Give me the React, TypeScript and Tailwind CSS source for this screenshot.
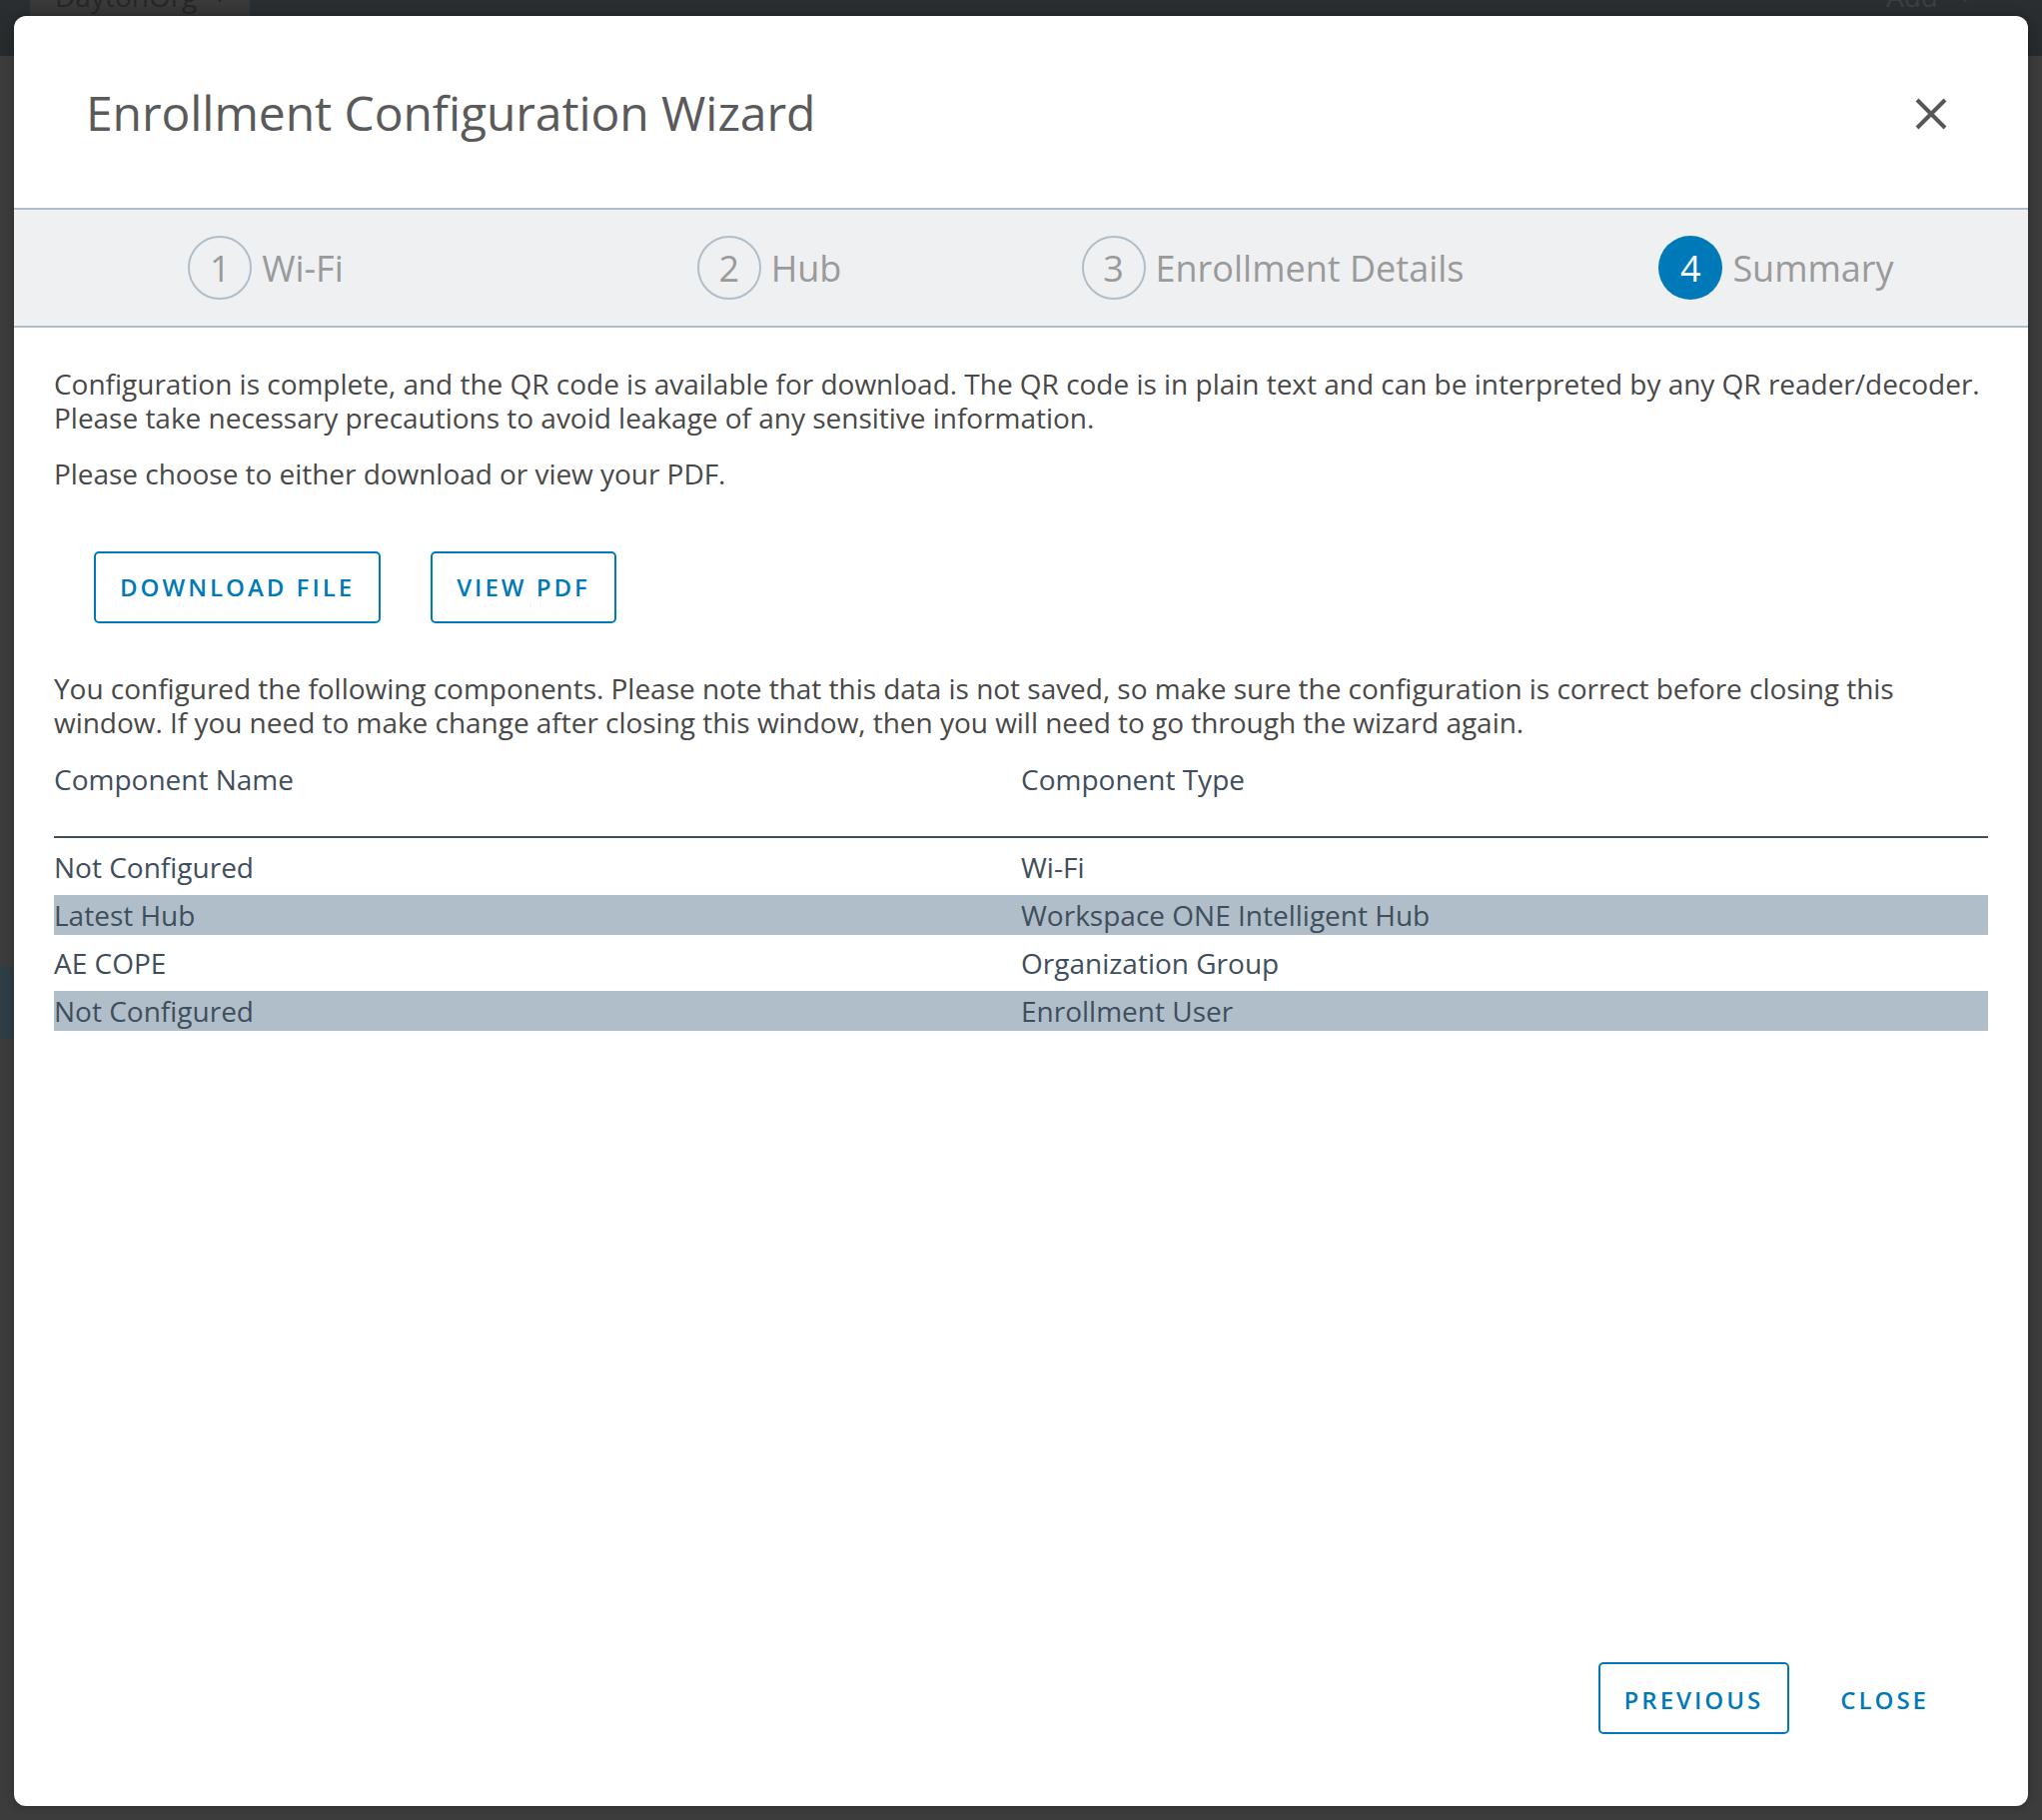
export default function App() {
  const steps = [
    { n: "1", label: "Wi-Fi" },
    { n: "2", label: "Hub" },
    { n: "3", label: "Enrollment Details" },
    { n: "4", label: "Summary", active: true },
  ];
  const rows = [
    ["Not Configured", "Wi-Fi", false],
    ["Latest Hub", "Workspace ONE Intelligent Hub", true],
    ["AE COPE", "Organization Group", false],
    ["Not Configured", "Enrollment User", true],
  ] as const;
  const btn =
    "h-[72px] rounded-[5px] border-2 border-[#0079b8] px-[24px] text-[24px] font-semibold tracking-[3px] text-[#0079b8]";
  return (
    <div className="relative h-[1822px] w-[2044px] overflow-hidden bg-[#3c3c3c] font-['Open_Sans',sans-serif]">
      <div className="flex h-[56px] justify-between bg-gradient-to-b from-[#2a2e30] to-[#262a2c]">
        <div className="ml-[30px] flex h-[16px] w-[220px] gap-[18px] overflow-hidden bg-gradient-to-b from-[#3a3a3a] to-[#343434] pl-[25px]">
          <div className="-mt-[21px] text-[28px] leading-[34px] text-[#252525]">DaytonOrg</div>
          <div className="-mt-[21px] text-[20px] leading-[34px] text-[#252525]">▾</div>
        </div>
        <div className="mr-[72px] flex h-[16px] gap-[22px] overflow-hidden">
          <div className="-mt-[21px] text-[28px] leading-[34px] text-[#3a3e40]">Add</div>
          <div className="-mt-[21px] text-[20px] leading-[34px] text-[#3a3e40]">▾</div>
        </div>
      </div>
      <div className="absolute left-0 top-[968px] h-[72px] w-[14px] bg-[#2f3d46]" />
      <div className="absolute left-[14px] top-[16px] flex h-[1792px] w-[2016px] flex-col overflow-hidden rounded-[12px] bg-white shadow-[0_0_10px_rgba(0,0,0,0.3)]">
        <div className="flex h-[192px] shrink-0 items-center justify-between pl-[72px] pr-[78px] pt-[4px]">
          <h1 className="pb-[2px] text-[48px] font-normal leading-[56px] tracking-[-0.07px] text-[#5a5a5a]">Enrollment Configuration Wizard</h1>
          <svg width="38" height="38" viewBox="0 0 38 38" fill="none" stroke="#565656" strokeWidth="4">
            <path d="M5 5L33 33M33 5L5 33" />
          </svg>
        </div>
        <div className="grid h-[120px] shrink-0 grid-cols-4 border-y-2 border-[#b0bec9] bg-[#eff0f2]">
          {steps.map((s) => (
            <div key={s.n} className="flex items-center justify-center gap-[10px]">
              <span
                className={
                  s.active
                    ? "flex h-[64px] w-[64px] items-center justify-center rounded-full bg-[#0079b8] pt-[2px] text-[36px] text-white"
                    : "flex h-[64px] w-[64px] items-center justify-center rounded-full border-2 border-[#b0bec9] pt-[2px] text-[36px] text-[#9a9a9a]"
                }
              >
                {s.n}
              </span>
              <span className="pt-[2px] text-[36px] text-[#9a9a9a]">{s.label}</span>
            </div>
          ))}
        </div>
        <div className="flex min-h-0 flex-1 flex-col px-[40px] pt-[39px] text-[28px] leading-[34px] text-[#484848]">
          <p className="tracking-[-0.018px]">
            Configuration is complete, and the QR code is available for download. The QR code is in plain text and can be interpreted by any QR reader/decoder.
            <br />
            Please take necessary precautions to avoid leakage of any sensitive information.
          </p>
          <p className="mt-[22px] tracking-[-0.04px]">Please choose to either download or view your PDF.</p>
          <div className="mt-[61px] flex gap-[50px] pl-[40px]">
            <button className={btn}>DOWNLOAD FILE</button>
            <button className={btn}>VIEW PDF</button>
          </div>
          <p className="mt-[48px] tracking-[-0.03px]">
            You configured the following components. Please note that this data is not saved, so make sure the configuration is correct before closing this
            <br />
            window. If you need to make change after closing this window, then you will need to go through the wizard again.
          </p>
          <div className="mt-[23px] grid grid-cols-2 border-b-2 border-[#3f4e5c] pb-[40px] text-[#3f4e5c]">
            <div>Component Name</div>
            <div>Component Type</div>
          </div>
          <div className="mt-[9px] flex flex-col gap-[8px] text-[#3f4e5c]">
            {rows.map(([a, b, hi], i) => (
              <div key={i} className={hi ? "grid h-[40px] grid-cols-2 items-center bg-[#b0bec9]" : "grid h-[40px] grid-cols-2 items-center"}>
                <div>{a}</div>
                <div>{b}</div>
              </div>
            ))}
          </div>
          <div className="mt-auto mb-[72px] flex items-center justify-end gap-[51px] pr-[59px]">
            <button className={`${btn} pt-[3px]`}>PREVIOUS</button>
            <button className="pt-[3px] text-[24px] font-semibold tracking-[3px] text-[#0079b8]">CLOSE</button>
          </div>
        </div>
      </div>
    </div>
  );
}
